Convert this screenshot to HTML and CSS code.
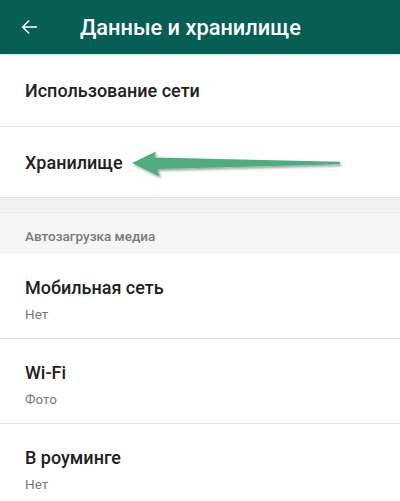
FILE: index.html
```html
<!DOCTYPE html>
<html lang="ru">
<head>
<meta charset="utf-8">
<link rel="stylesheet" href="styles.css">
</head>
<body>
<header class="appbar">
  <svg class="back" width="24" height="24" viewBox="0 0 24 24"><path d="M20 11.2H7.4l5.2-5.2-1-1L4.6 12l7 7 1-1-5.2-5.2H20z" fill="#fff"/></svg>
  <h1 class="title">Данные и хранилище</h1>
</header>
<main>
  <div class="row single first"><span class="label">Использование сети</span></div>
  <div class="row single second">
    <span class="label">Хранилище</span>
    <svg class="pointer" width="400" height="70" viewBox="0 127 400 70">
      <defs>
        <filter id="sh" x="-10%" y="-50%" width="120%" height="200%">
          <feDropShadow dx="1.5" dy="2" stdDeviation="1.2" flood-color="#000" flood-opacity="0.35"/>
        </filter>
      </defs>
      <polygon points="132,163 156,151.5 154.5,157.5 340,161.8 340,164.2 157.5,169 159.5,176.5" fill="#50ad7d" filter="url(#sh)"/>
    </svg>
  </div>
  <div class="gap"></div>
  <div class="section">Автозагрузка медиа</div>
  <div class="row double"><span class="label">Мобильная сеть</span><span class="sub">Нет</span></div>
  <div class="row double"><span class="label">Wi-Fi</span><span class="sub">Фото</span></div>
  <div class="row double last"><span class="label">В роуминге</span><span class="sub">Нет</span></div>
</main>
</body>
</html>
```
FILE: styles.css
```css
html, body {
  margin: 0;
  padding: 0;
  background: #fff;
  font-family: Roboto, "Noto Sans", sans-serif;
  overflow: hidden;
}
.appbar {
  height: 54px;
  background: #075e54;
  display: flex;
  align-items: center;
  padding-left: 17px;
  box-shadow: 0 1px 2px rgba(0,0,0,0.15);
  position: relative;
  z-index: 1;
}
.back {
  display: block;
  flex: none;
}
.title {
  margin: 0 0 0 39px;
  color: #fff;
  font-size: 21.8px;
  font-weight: 500;
}
.row {
  display: flex;
  flex-direction: column;
  justify-content: center;
  padding-left: 25px;
  border-bottom: 1px solid #e2e2e2;
  position: relative;
}
.first { height: 72px; }
.second { height: 70px; }
.label {
  font-size: 18px;
  font-weight: 500;
  color: #212121;
}
.pointer {
  position: absolute;
  left: 0;
  top: 0;
}
.gap {
  height: 14px;
  background: #f2f2f2;
  border-bottom: 1px solid #e8e8e8;
}
.section {
  height: 41px;
  box-sizing: border-box;
  padding-top: 4px;
  background: #f5f5f5;
  display: flex;
  align-items: center;
  padding-left: 25px;
  font-size: 13.5px;
  font-weight: 500;
  color: #7a7a7a;
}
.double {
  height: 85px;
  justify-content: flex-start;
  padding-top: 23px;
  box-sizing: border-box;
}
.double .sub {
  margin-top: 8px;
  font-size: 13.5px;
  color: #7a7a7a;
}
.last { border-bottom: none; }
```
